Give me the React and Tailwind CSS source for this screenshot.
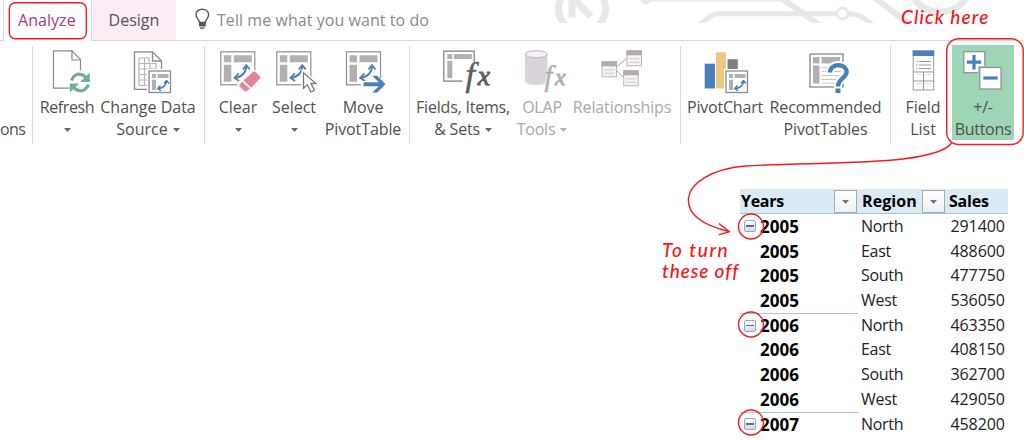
import React from 'react';
import clsx from 'clsx';

const PivotGrid = ({ x = 6.3 }) => (
    <g transform={`translate(${x} 5.3)`}>
        <rect x="0.5" y="0.5" width="34" height="33" fill="#fff" stroke="#8f8f8f" strokeWidth="1.2" />
        <path d="M3.5 4h7.5v7h-7.5zM13.5 4h18v7h-18zM3.5 13.5h7.5v17h-7.5z" fill="#b1b1b1" />
        <g fill="none" stroke="#4a80b9" strokeWidth="2">
            <path d="M14.5 26.5C21 26 26 21.500 26 14.500" />
            <path d="M18.500 22.200L14.200 26.500L18.800 29.700M22.500 18.200L26 13.800L29.500 18.200" strokeWidth="1.800" />
        </g>
    </g>
);

const MiniPivot = () => (
    <g>
        <rect x="25" y="25" width="21.500" height="21.500" fill="#fff" stroke="#8a8a8a" strokeWidth="1.300" />
        <path d="M28 28h4v4h-4zM33.500 28h11v4h-11zM28 33.700h4v10.300h-4z" fill="#b1b1b1" />
        <path d="M34 42.500C38.500 42.500 42.500 39.500 42.500 35" fill="none" stroke="#3f78b5" strokeWidth="1.500" />
        <path d="M36.500 39.500L33.800 42.500L37 45M40 37.500L42.500 34.500L45 37.500" fill="none" stroke="#3f78b5" strokeWidth="1.400" />
    </g>
);

const Fx = ({ x, y, size, fill }) => (
    <g fill={fill} stroke={fill} strokeWidth="0.5" fontStyle="italic" fontFamily="'Liberation Serif', serif">
        <text x={x} y={y} fontSize={size}>f</text>
        <text x={x + size * 0.36} y={y - 1} fontSize={size * 0.82} strokeWidth="0.9">x</text>
    </g>
);

const TableBox = ({ x, y }) => (
    <g transform={`translate(${x} ${y})`}>
        <rect x="0.5" y="0.5" width="14.500" height="15" fill="#f7f1f6" stroke="#bcb6bb" />
        <path d="M0 0h15.500v5h-15.500z" fill="#b0adb0" />
        <path d="M3 8.500h10M3 12h10" stroke="#cfc8ce" />
    </g>
);

const icons = {
    refresh: (
        <>
            <path d="M26.500 42.200H10.500V4.800H29L37.500 13.500V24.500" fill="#fff" stroke="#8a8a8a" strokeWidth="1.200" />
            <path d="M29 4.800V14H37.500" fill="none" stroke="#8a8a8a" strokeWidth="1.200" />
            <g fill="none" stroke="#74ac96" strokeWidth="3.200">
                <path d="M28.500 34.500C30 29.500 34 27.800 37.500 28.300C40 28.600 42 30 43.500 32.500" />
                <path d="M45.500 38.500C44 43 40 45.200 36.500 44.700C34 44.400 32 43 30.500 40.800" />
            </g>
            <path d="M46.800 26.500V36H37.200zM26.800 46.500V37.500H36.200z" fill="#74ac96" />
        </>
    ),
    source: (
        <>
            <path d="M10.500 43.300V5.800H28.500L37.500 15V43.300z" fill="#fff" stroke="#8a8a8a" strokeWidth="1.300" />
            <path d="M28.500 5.800V15H37.500" fill="none" stroke="#8a8a8a" strokeWidth="1.300" />
            <path d="M15 12H25V17.500H32V39.500H15zM15 17.500H32M15 23H32M15 28.500H32M15 34H32M20.500 12V39.500M26 17.500V39.500" fill="none" stroke="#b5b5b5" strokeWidth="1.200" />
            <rect x="23" y="23" width="25" height="25" fill="#fff" />
            <MiniPivot />
        </>
    ),
    clear: (
        <>
            <PivotGrid />
            <path d="M23.500 37.500L40.500 23.500L49 31L32 47.500H25z" fill="#fff" />
            <path d="M29.500 34.500L38.800 26Q40.200 24.700 41.600 26L45.800 30.200Q47 31.500 45.800 32.800L37.200 41.800z" fill="#e68497" />
            <path d="M28.300 35.700L25.500 38.400Q24.800 39.300 25.500 40.300L30.500 45.300Q31.600 46 32.500 45.300L36 42.800z" fill="#e68497" />
        </>
    ),
    select: (
        <>
            <PivotGrid />
            <path d="M33.500 26.800V42.200L37.300 38.800L40.800 46L44.300 44.300L41 37.500H46z" fill="#fff" stroke="#fff" strokeWidth="4" />
            <path d="M33.500 26.800V42.200L37.300 38.800L40.800 46L44.300 44.300L41 37.500H46z" fill="#fff" stroke="#777" strokeWidth="1.300" />
        </>
    ),
    move: (
        <>
            <PivotGrid x={7} />
            <path d="M22 38.200H42M34 29.500L43.500 38.200L34 47" fill="none" stroke="#fff" strokeWidth="6.500" />
            <path d="M24.500 36.200H39.800L33.200 29.800H38.200L46.500 38.200L38.200 46.600H33.200L39.800 40.200H24.500z" fill="#4a80b9" />
        </>
    ),
    fields: (
        <>
            <path d="M23.500 35.200H4.800V5.200H35.200V16" fill="none" stroke="#7d7d7d" strokeWidth="1.200" />
            <path d="M8.300 8h5v5h-5zM15 8h17.800v5H15zM8.300 14.700h5v17.300h-5z" fill="#b1b1b1" />
            <Fx x={26.5} y={40} size={34} fill="#5d5d5d" />
        </>
    ),
    olap: (
        <>
            <path d="M7 8.200V35.500C7 40 29.500 40 29.500 35.500V8.200z" fill="#d9d4d9" />
            <ellipse cx="18.300" cy="8.200" rx="11" ry="3.500" fill="#f5f0f4" stroke="#bdb8bd" />
            <g stroke="#fff" strokeWidth="4">
                <path d="M33 20L28 42" />
            </g>
            <Fx x={26.5} y={39.5} size={29} fill="#b3b0b3" />
        </>
    ),
    relationships: (
        <>
            <path d="M18.500 21L29 12M18.500 24.500L26 32" stroke="#a8a8a8" />
            <TableBox x={3.5} y={15.3} />
            <TableBox x={28.5} y={4.3} />
            <TableBox x={25.2} y={24.3} />
        </>
    ),
    chart: (
        <>
            <path d="M3.700 17.700h10.300v24.800h-10.300z" fill="#4a80b9" />
            <path d="M15 6.300h10v36.200H15z" fill="#edc87e" />
            <path d="M26.500 13.200h10.300v10h-10.300z" fill="#7f7f7f" />
            <rect x="23" y="23" width="25" height="25" fill="#fff" />
            <MiniPivot />
        </>
    ),
    recommended: (
        <>
            <rect x="8" y="8" width="33" height="33" fill="#fff" stroke="#8a8a8a" strokeWidth="1.300" />
            <path d="M11 11h6.500v6.500h-6.500zM19.500 11h18.500v6.500H19.500zM11 19.500h6.500v18h-6.500z" fill="#b1b1b1" />
            <path d="M19.500 21.500h19M19.500 25.500h19M19.500 29.500h19M19.500 33.500h19M19.500 37h19" stroke="#c8c8c8" />
            <path d="M28 27.500C28 15.500 44.500 17 44.500 26.300C44.500 32.500 36 32 36 40V47" fill="none" stroke="#fff" strokeWidth="8" />
            <path d="M28 26.500C28.200 16.500 44.600 17.200 44.600 26C44.600 32 36 32.500 36 40.500" fill="none" stroke="#4a80b9" strokeWidth="4.400" />
            <path d="M33.500 42.500h5v4.500h-5z" fill="#4a80b9" />
        </>
    ),
    fieldList: (
        <>
            <rect x="14.200" y="5" width="20.500" height="39" fill="#fff" stroke="#9a9a9a" />
            <path d="M13.700 4.500h21.500v5.500H13.700z" fill="#4a80b9" />
            <path d="M17 15.500h1.500M20 15.500h12M17 19h1.500M20 19h12M17 22.500h1.500M20 22.500h12" stroke="#999" />
            <path d="M14 26H35M14 35H35M24.500 26V44" stroke="#9a9a9a" strokeWidth="1.200" />
            <path d="M17 28.500h5M27 28.500h5M17 37.500h5M27 37.500h5" stroke="#ddd" />
        </>
    ),
    buttons: (
        <>
            <rect x="4.800" y="5.700" width="21" height="21" fill="#fff" stroke="#8a8f8c" strokeWidth="1.200" />
            <path d="M7.800 16.200H22.200M15 9V23.400" stroke="#4a80b9" strokeWidth="3.200" />
            <rect x="19" y="20" width="24" height="25" fill="#9fd5b7" />
            <rect x="20.800" y="21.500" width="21.200" height="21.500" fill="#fff" stroke="#8a8f8c" strokeWidth="1.200" />
            <path d="M24.300 32H38.700" stroke="#4a80b9" strokeWidth="3.200" />
        </>
    ),
};

const Caret = ({ className }) => (
    <svg width="7" height="4" viewBox="0 0 7 4" className={className}>
        <path d="M0 0h7L3.500 4z" fill="currentColor" />
    </svg>
);

const groups = [
    {
        className: 'w-[172px] pl-1',
        items: [
            { icon: 'refresh', width: 'w-[60px]', lines: ['Refresh'], tracking: 'tracking-[-0.4px]', caret: true },
            { icon: 'source', width: 'w-[102px]', lines: ['Change Data', 'Source'], caret: true },
        ],
    },
    {
        className: 'w-[205px] pl-[7px]',
        items: [
            { icon: 'clear', width: 'w-[52px]', lines: ['Clear'], caret: true },
            { icon: 'select', width: 'w-[60px]', lines: ['Select'], caret: true },
            { icon: 'move', width: 'w-[78px]', lines: ['Move', 'PivotTable'], tracking: 'tracking-[-0.1px]' },
        ],
    },
    {
        className: 'w-[271px] pl-[3px]',
        items: [
            { icon: 'fields', width: 'w-[100px]', lines: ['Fields, Items,', '& Sets'], tracking: 'tracking-[-0.2px]', caret: true },
            { icon: 'olap', width: 'w-[58px]', lines: ['OLAP', 'Tools'], tracking: 'tracking-[-0.2px]', caret: true, disabled: true },
            { icon: 'relationships', width: 'w-[102px]', lines: ['Relationships'], tracking: 'tracking-[-0.1px]', disabled: true },
        ],
    },
    {
        className: 'w-[210px] pl-[3px]',
        items: [
            { icon: 'chart', width: 'w-[82px]', lines: ['PivotChart'], tracking: 'tracking-[-0.2px]' },
            { icon: 'recommended', width: 'w-[119px]', lines: ['Recommended', 'PivotTables'], tracking: 'tracking-[-0.1px]' },
        ],
    },
    {
        className: 'w-[133px] pl-[6px] gap-[3px] !border-r-0',
        items: [
            { icon: 'fieldList', width: 'w-[52px]', lines: ['Field', 'List'] },
            { icon: 'buttons', width: 'w-[62px]', lines: ['+/-', 'Buttons'], tracking: 'tracking-[-0.3px]', active: true },
        ],
    },
];

const RibbonButton = ({ icon, width, lines, tracking, caret, disabled, active }) => (
    <button className={clsx('relative h-[99px] flex flex-col items-center text-base leading-[22px] whitespace-nowrap', width, tracking, disabled ? 'text-[#a8a8a8]' : 'text-[#505050]')}>
        {active && <span className="absolute inset-x-0 -top-px h-[95px] bg-[#9fd5b7]" />}
        <svg width="48" height="50" viewBox="0 0 48 50" className="relative shrink-0 overflow-visible">{icons[icon]}</svg>
        <span className="relative">{lines[0]}</span>
        <span className="relative h-[22px] flex items-center gap-[5px]">
            {lines[1]}
            {caret && <Caret className="mt-px opacity-85" />}
        </span>
    </button>
);

const Tabs = () => (
    <nav className="relative h-[41px] flex text-base">
        <div className="w-1 border-r border-b border-[#d9d9d9]" />
        <div className="w-[87px] pl-[14px] pt-2 text-[#a83a80] tracking-[0.05px]">Analyze</div>
        <div className="w-[85px] border-l border-b border-[#d9d9d9] bg-[#fbecf5] text-[#555] text-center pt-2">Design</div>
        <div className="flex-1 border-b border-[#d9d9d9] flex items-start pt-2 pl-[19px] text-[#8a8a8a]">
            <svg width="15" height="22" viewBox="0 0 15 22" className="mr-[7px]">
                <path d="M4.500 14.500C4.500 11.500 1 10.500 1 6.800C1 3.200 4 1.200 7.300 1.200S13.600 3.200 13.600 6.800C13.600 10.500 10.200 11.500 10.200 14.500z" fill="none" stroke="#555" strokeWidth="1.400" />
                <path d="M4 14.500h6.700v4h-6.700zM5 19.500h4.700v1.200h-4.700z" fill="#555" />
            </svg>
            <span className="tracking-[0.06px]">Tell me what you want to do</span>
        </div>
    </nav>
);

// Circuit pattern behind the title area
const Circuit = () => (
    <svg width="480" height="23" viewBox="544 0 480 23" className="absolute top-0 left-[544px]" fill="none" stroke="#e8e8e8" strokeWidth="6">
        <circle cx="582" cy="8.500" r="23.500" strokeWidth="7" />
        <path d="M572 -4V17.500M572 -3L591 16.500" strokeWidth="7" />
        <circle cx="646" cy="-1" r="5.500" fill="#e8e8e8" stroke="none" />
        <path d="M646 0.500H780" strokeWidth="2" />
        <path d="M779 -3L800 11L821 26M874 -3L910 25" />
        <path d="M698 26C706 21 710 13.700 717 13.700H837M848 13.700C858 13 864 18 874 26" strokeWidth="5" />
        <circle cx="842.500" cy="13.500" r="5.500" strokeWidth="3" />
        <circle cx="940" cy="-20" r="32" strokeWidth="7" />
    </svg>
);

const rows = [
    ['2005', 'North', '291400', true],
    ['2005', 'East', '488600'],
    ['2005', 'South', '477750'],
    ['2005', 'West', '536050'],
    ['2006', 'North', '463350', true],
    ['2006', 'East', '408150'],
    ['2006', 'South', '362700'],
    ['2006', 'West', '429050'],
    ['2007', 'North', '458200', true],
];

const FilterButton = () => (
    <span className="w-[23px] h-[23px] shrink-0 mt-px border border-[#a6abb3] bg-gradient-to-b from-white to-[#f0f1f4] text-[#777] flex items-center justify-center">
        <Caret />
    </span>
);

const PivotTable = () => (
    <div className="ml-[740px] mt-[44px] w-[268px] text-black">
        <div className="h-[25px] flex leading-[25px] bg-[#dceaf6] border-b border-[#9fc5e8] font-bold text-base">
            <span className="w-[94px] pl-px tracking-[-0.3px]">Years</span>
            <FilterButton />
            <span className="w-[65px] pl-[5px] tracking-[0.1px]">Region</span>
            <FilterButton />
            <span className="pl-[4px] tracking-[-0.2px]">Sales</span>
        </div>
        {rows.map(([year, region, sales, first], i) => (
            <div key={i} className="h-[24.7px] leading-[25px] flex text-base text-[#222]">
                <div className={clsx('w-[118px] flex items-center', first && i > 0 && 'border-t border-[#a5c8e9]')}>
                    <span className="w-5 pl-1">
                        {first && (
                            <span className="block w-3 h-3 rounded-[2px] border border-[#9aa6bf] bg-gradient-to-b from-white to-[#d5dae5] pt-1">
                                <span className="block h-[1.5px] mx-px bg-[#5c6a8c]" />
                            </span>
                        )}
                    </span>
                    <span className="font-bold text-[17px] text-black">{year}</span>
                </div>
                <span className="w-[92.5px] pl-[3px] tracking-[-0.3px]">{region}</span>
                <span className="tracking-[-0.1px]">{sales}</span>
            </div>
        ))}
    </div>
);

const Annotations = () => (
    <div className="absolute inset-0 pointer-events-none text-[#f51414] italic font-medium text-[19px] leading-[21px] font-['Lato',sans-serif]">
        <svg width="1024" height="441" viewBox="0 0 1024 441" className="absolute inset-0" fill="none" stroke="#f51c1c" strokeWidth="1.400">
            <rect x="9.300" y="2.800" width="77" height="36" rx="6" />
            <rect x="946.700" y="38.800" width="76.500" height="105.700" rx="12" />
            <path d="M951.500 143C947 150 934 155 903 159C860 164 800 163 745 166C710 169 690 184 688.500 198C687 214 702 225 729 231.500" />
            <path d="M719 223.500L729.300 231.700L718.700 234.800" />
            <circle cx="751" cy="226.500" r="12.500" />
            <circle cx="751" cy="324.500" r="12.500" />
            <circle cx="751" cy="422.500" r="12.500" />
        </svg>
        <span className="absolute left-[901px] top-[6px] tracking-[1.1px] whitespace-nowrap">Click here</span>
        <span className="absolute left-[662px] top-[239px] tracking-[1.6px] whitespace-nowrap">To turn</span>
        <span className="absolute left-[662px] top-[260px] tracking-[0.9px] whitespace-nowrap">these off</span>
    </div>
);

export default function App() {
    return (
        <div className="relative w-[1024px] h-[441px] bg-white overflow-hidden font-['Open_Sans',sans-serif]">
            <Circuit />
            <Tabs />
            <div className="h-[104px] pt-[5px] flex">
                <div className="w-[33px] h-[98px] border-r border-[#dcdcdc] pt-[72px] text-base leading-[22px] tracking-[-0.6px] text-[#505050]">ons</div>
                {groups.map((group, i) => (
                    <div key={i} className={clsx('h-[98px] flex border-r border-[#dcdcdc]', group.className)}>
                        {group.items.map((item) => <RibbonButton key={item.icon} {...item} />)}
                    </div>
                ))}
            </div>
            <PivotTable />
            <Annotations />
        </div>
    );
}
